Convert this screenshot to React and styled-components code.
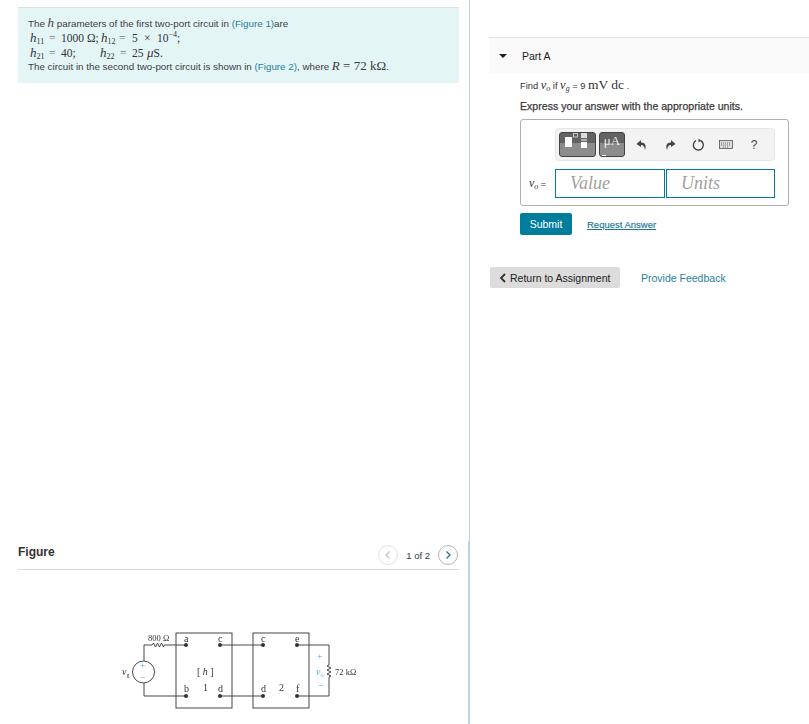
import React from "react";
import styled, { createGlobalStyle } from "styled-components";

const GlobalStyle = createGlobalStyle`
  html, body {
    margin: 0;
    padding: 0;
    background: #fff;
  }
  body {
    font-family: "Liberation Sans", Arial, sans-serif;
    color: #333;
  }
`;

const Page = styled.div`
  display: flex;
  width: 809px;
  height: 724px;
  overflow: hidden;
`;

const LeftPane = styled.div`
  flex: 0 0 470px;
  height: 724px;
  box-sizing: border-box;
  border-right: 1px solid #bcd3e3;
  display: flex;
  flex-direction: column;
`;

const TopSection = styled.div`
  height: 541px;
  box-sizing: border-box;
  padding: 7px 10px 0 18px;
`;

const BottomSection = styled.div`
  flex: 1;
  padding: 0 9px 0 18px;
  border-right: 1px solid #bcd3e3;
`;

const Intro = styled.div`
  height: 76px;
  box-sizing: border-box;
  padding: 9px 10px 0;
  background: #e4f5f6;
  border-top: 1px solid #d9e2e3;
  font-size: 9.8px;
  color: #3d3d3d;
`;

const TextLine = styled.div`
  height: ${(p) => p.$h || 12}px;
  line-height: 12px;
  white-space: pre;
`;

const MathLine = styled.div`
  height: 15px;
  line-height: 15px;
  padding-left: 2px;
  font-family: "Liberation Serif", serif;
  font-size: 11.5px;
  color: #333;
  white-space: pre;
  i {
    font-size: 13px;
  }
  sub {
    font-size: 8px;
    line-height: 0;
    vertical-align: -2px;
  }
  sup {
    font-size: 8px;
    line-height: 0;
  }
`;

const Term = styled.span`
  display: inline-block;
  width: ${(p) => p.$w}px;
  color: ${(p) => (p.$light ? "#777" : "inherit")};
`;

const InlineMath = styled.span`
  font-family: "Liberation Serif", serif;
  font-size: 13px;
`;

const FigLink = styled.span`
  color: #1f7f9c;
`;

const FigureBar = styled.div`
  height: 29px;
  box-sizing: border-box;
  border-bottom: 1px solid #dcdcdc;
  display: flex;
  align-items: center;
  justify-content: space-between;
  padding-bottom: 6px;
`;

const FigureTitle = styled.span`
  font-size: 12px;
  font-weight: bold;
  color: #333;
`;

const Pager = styled.div`
  display: flex;
  align-items: center;
  gap: 8px;
  margin: 6px 1px 0 0;
  font-size: 9.5px;
  color: #2a3a4a;
`;

const PageButton = styled.span`
  width: 20px;
  height: 20px;
  box-sizing: border-box;
  border-radius: 50%;
  border: 1px solid ${(p) => (p.$off ? "#e2e2e2" : "#b5b5b5")};
  color: ${(p) => (p.$off ? "#c4c4c4" : "#2c6e8f")};
  display: flex;
  align-items: center;
  justify-content: center;
`;

const FigureBox = styled.div`
  padding: 45px 0 0 82px;
  svg {
    display: block;
    filter: blur(0.3px);
  }
`;

const RightPane = styled.div`
  flex: 1;
  min-width: 0;
  padding-top: 37px;
`;

const PartHeader = styled.div`
  height: 36px;
  margin-left: 19px;
  box-sizing: border-box;
  border-top: 1px solid #e2e2e2;
  background: #fafafa;
  display: flex;
  align-items: center;
  padding-left: 10px;
  font-size: 10.5px;
  color: #222;
`;

const Caret = styled.span`
  width: 0;
  height: 0;
  border-left: 4px solid transparent;
  border-right: 4px solid transparent;
  border-top: 4px solid #222;
  margin-right: 15px;
`;

const PartBody = styled.div`
  padding-left: 50px;
`;

const Prompt = styled.div`
  margin-top: 4px;
  height: 16px;
  line-height: 16px;
  font-size: 9.3px;
  color: #333;
  white-space: pre;
  b {
    font-family: "Liberation Serif", serif;
    font-weight: normal;
    font-size: 13.5px;
  }
  i {
    font-family: "Liberation Serif", serif;
    font-size: 12.5px;
  }
  sub {
    font-size: 8px;
    line-height: 0;
    vertical-align: -2px;
  }
`;

const Instruction = styled.div`
  margin-top: 8px;
  font-size: 10.5px;
  line-height: 11px;
  letter-spacing: 0.04px;
  color: #3a3a3a;
  -webkit-text-stroke: 0.25px #3a3a3a;
`;

const AnswerBox = styled.div`
  margin-top: 7px;
  height: 87px;
  width: 269px;
  box-sizing: border-box;
  border: 1px solid #b0b0b0;
  border-radius: 3px;
  padding: 8px 13px 0 34px;
`;

const Toolbar = styled.div`
  height: 33px;
  box-sizing: border-box;
  background: #f3f3f3;
  border: 1px solid #e6e6e6;
  border-radius: 4px;
  display: flex;
  align-items: center;
  padding-left: 3px;
`;

const ToolKey = styled.div`
  position: relative;
  width: ${(p) => p.$w}px;
  height: 25px;
  margin-right: 3px;
  box-sizing: border-box;
  border-radius: 3px;
  border: 1px solid #444;
  background: linear-gradient(#636363 0 45%, #8c8c8c 45% 100%);
  overflow: hidden;
  svg {
    display: block;
  }
`;

const KeyLabel = styled.span`
  display: block;
  text-align: center;
  font-family: "Liberation Serif", serif;
  font-size: 13px;
  line-height: 16px;
  color: #ececec;
`;

const KeyMark = styled.span`
  position: absolute;
  left: 2px;
  bottom: 0;
  width: 4px;
  height: 1px;
  background: #fff;
`;

const ToolIcon = styled.span`
  width: 28px;
  display: flex;
  align-items: center;
  justify-content: center;
  color: #444;
  font-size: 12px;
`;

const InputRow = styled.div`
  display: flex;
  align-items: center;
  margin-top: 8px;
  margin-left: -34px;
`;

const VarLabel = styled.div`
  width: 34px;
  box-sizing: border-box;
  padding-left: 8px;
  font-size: 9px;
  color: #333;
  white-space: pre;
  i {
    font-family: "Liberation Serif", serif;
    font-size: 12px;
  }
  sub {
    font-size: 8px;
    line-height: 0;
    vertical-align: -2px;
  }
`;

const AnswerField = styled.div`
  width: ${(p) => p.$w}px;
  height: 29px;
  margin-right: ${(p) => p.$gap || 0}px;
  box-sizing: border-box;
  border: 1px solid #007b9c;
  padding-left: 14px;
  display: flex;
  align-items: center;
  font-family: "Liberation Serif", serif;
  font-style: italic;
  font-size: 18px;
  color: #a3a09c;
`;

const Actions = styled.div`
  display: flex;
  align-items: center;
  margin-top: 7px;
  gap: 15px;
`;

const SubmitButton = styled.div`
  width: 52px;
  height: 22px;
  border-radius: 2px;
  background: #007c9c;
  color: #fff;
  font-size: 10.5px;
  display: flex;
  align-items: center;
  justify-content: center;
`;

const RequestLink = styled.span`
  color: #1a7896;
  font-size: 9.5px;
  text-decoration: underline;
  -webkit-text-stroke: 0.15px #1a7896;
`;

const Footer = styled.div`
  display: flex;
  align-items: center;
  margin: 32px 0 0 20px;
  gap: 21px;
`;

const ReturnButton = styled.div`
  width: 130px;
  height: 21px;
  box-sizing: border-box;
  background: #dcdcdc;
  border-radius: 2px;
  display: flex;
  align-items: center;
  padding-left: 9px;
  gap: 3px;
  font-size: 10.5px;
  color: #222;
`;

const FeedbackLink = styled.span`
  font-size: 10.5px;
  color: #1f7f9c;
`;

const Circuit = () => (
  <svg width="270" height="109" viewBox="0 0 270 109" fontFamily="Liberation Serif, serif" fill="#333">
    <g fill="none" stroke="#333" strokeWidth="0.9">
      <rect x="76" y="18" width="56" height="75" />
      <rect x="153" y="18" width="56" height="75" />
      <path d="M44 46V30H52l1.500-2 2 4 2-4 2 4 2-4 2 4 1-2H86" />
      <path d="M44 68V81H86" />
      <circle cx="43.500" cy="57" r="11" />
      <path d="M120 30H163M120 81H163M197 30H229V50M197 81H229V64" />
      <path d="M229 50l-2 1 4 2-4 2 4 2-4 2 4 2-2 1v2" />
    </g>
    <g>
      <circle cx="86" cy="30" r="2" />
      <circle cx="120" cy="30" r="2" />
      <circle cx="86" cy="81" r="2" />
      <circle cx="120" cy="81" r="2" />
      <circle cx="163" cy="30" r="2" />
      <circle cx="197" cy="30" r="2" />
      <circle cx="163" cy="81" r="2" />
      <circle cx="197" cy="81" r="2" />
    </g>
    <g fontSize="10">
      <text x="84" y="27">a</text>
      <text x="118" y="27">c</text>
      <text x="161" y="27">c</text>
      <text x="195" y="27">e</text>
      <text x="84" y="77">b</text>
      <text x="118" y="77">d</text>
      <text x="161" y="77">d</text>
      <text x="196" y="77">f</text>
      <text x="97" y="60">[ <tspan fontStyle="italic">h</tspan> ]</text>
      <text x="103" y="76">1</text>
      <text x="179" y="76">2</text>
    </g>
    <g fontSize="8.500">
      <text x="48" y="26">800 Ω</text>
      <text x="235" y="60">72 kΩ</text>
    </g>
    <g fontSize="10">
      <text x="22" y="60" fontStyle="italic">v</text>
      <text x="26.500" y="62" fontSize="6">g</text>
      <text x="216" y="60" fontStyle="italic" fill="#5fb0d6">v</text>
      <text x="220.500" y="62" fontSize="6" fill="#5fb0d6">o</text>
      <text x="217" y="45" fill="#5fb0d6">+</text>
      <text x="218" y="74" fill="#5fb0d6">−</text>
      <text x="40" y="54" fill="#5fb0d6">+</text>
      <text x="40" y="66" fill="#5fb0d6">−</text>
    </g>
  </svg>
);

const Chevron = ({ dir, size = 10 }) => (
  <svg width={size} height={size} viewBox="0 0 10 10" fill="none" stroke="currentColor" strokeWidth="1.3">
    <path d={dir === "left" ? "M6.500 1.500L3 5l3.500 3.500" : "M3.500 1.500L7 5 3.500 8.500"} />
  </svg>
);

const App = () => {
  return (
    <Page>
      <GlobalStyle />
      <LeftPane>
        <TopSection>
          <Intro>
            <TextLine $h={13}>
              The <InlineMath><i>h</i></InlineMath> parameters of the first two-port circuit in{" "}
              <FigLink>(Figure 1)</FigLink>are
            </TextLine>
            <MathLine>
              <Term $w={19}><i>h</i><sub>11</sub></Term>
              <Term $w={12} $light>=</Term>
              <Term $w={40}>1000 Ω;</Term>
              <Term $w={18}><i>h</i><sub>12</sub></Term>
              <Term $w={13} $light>=</Term>
              <Term $w={12}>5</Term>
              <Term $w={13}>×</Term>
              10<sup>−4</sup>;
            </MathLine>
            <MathLine>
              <Term $w={19}><i>h</i><sub>21</sub></Term>
              <Term $w={12} $light>=</Term>
              <Term $w={39}>40;</Term>
              <Term $w={20}><i>h</i><sub>22</sub></Term>
              <Term $w={12} $light>=</Term>
              <Term $w={15}>25</Term>
              <i>μ</i>S.
            </MathLine>
            <TextLine>
              The circuit in the second two-port circuit is shown in <FigLink>(Figure 2)</FigLink>, where{" "}
              <InlineMath><i>R</i> = 72 kΩ</InlineMath>.
            </TextLine>
          </Intro>
        </TopSection>
        <BottomSection>
          <FigureBar>
            <FigureTitle>Figure</FigureTitle>
            <Pager>
              <PageButton $off><Chevron dir="left" /></PageButton>
              1 of 2
              <PageButton><Chevron dir="right" /></PageButton>
            </Pager>
          </FigureBar>
          <FigureBox>
            <Circuit />
          </FigureBox>
        </BottomSection>
      </LeftPane>
      <RightPane>
        <PartHeader>
          <Caret />
          Part A
        </PartHeader>
        <PartBody>
          <Prompt>
            Find <i>v<sub>o</sub></i> if <i>v<sub>g</sub></i> = 9 <b>mV dc</b> .
          </Prompt>
          <Instruction>Express your answer with the appropriate units.</Instruction>
          <AnswerBox>
            <Toolbar>
              <ToolKey $w={37}>
                <svg width="35" height="23" viewBox="0 0 35 23">
                  <rect x="5" y="4" width="7" height="10" fill="#fff" />
                  <rect x="13.500" y="0.500" width="4" height="3.500" fill="none" stroke="#ddd" strokeWidth="0.8" />
                  <rect x="21" y="0" width="6" height="5" fill="#ddd" />
                  <rect x="21" y="6.500" width="6" height="1" fill="#fff" />
                  <rect x="21" y="9" width="6" height="6" fill="#fff" />
                </svg>
              </ToolKey>
              <ToolKey $w={26}>
                <KeyLabel>μA</KeyLabel>
                <KeyMark />
              </ToolKey>
              <ToolIcon>
                <svg width="12" height="12" viewBox="0 0 12 12" fill="#444">
                  <path d="M5 1L0.500 5 5 8V6c2.500 0 3.500 1.500 4 5 1.500-4 0.500-7.500-4-7.500z" />
                </svg>
              </ToolIcon>
              <ToolIcon>
                <svg width="12" height="12" viewBox="0 0 12 12" fill="#444">
                  <path d="M7 1l4.500 4L7 8V6C4.500 6 3.500 7.500 3 11 1.500 7 2.500 3.500 7 3.500z" />
                </svg>
              </ToolIcon>
              <ToolIcon>
                <svg width="13" height="13" viewBox="0 0 13 13" fill="none" stroke="#444" strokeWidth="1.400">
                  <path d="M8.500 2.500A5 5 0 1 1 4 2.600" />
                  <path d="M6.500 0.500v4l2.500-2z" fill="#444" stroke="none" />
                </svg>
              </ToolIcon>
              <ToolIcon>
                <svg width="14" height="9" viewBox="0 0 14 9" fill="#ddd" stroke="#555" strokeWidth="0.8">
                  <rect x="0.500" y="0.500" width="13" height="8" />
                  <path d="M2 3H12M2 5H12M4 7H10" strokeDasharray="1 1" />
                </svg>
              </ToolIcon>
              <ToolIcon>?</ToolIcon>
            </Toolbar>
            <InputRow>
              <VarLabel>
                <i>v<sub>o</sub></i> =
              </VarLabel>
              <AnswerField $w={110} $gap={1}>Value</AnswerField>
              <AnswerField $w={109}>Units</AnswerField>
            </InputRow>
          </AnswerBox>
          <Actions>
            <SubmitButton>Submit</SubmitButton>
            <RequestLink>Request Answer</RequestLink>
          </Actions>
        </PartBody>
        <Footer>
          <ReturnButton>
            <svg width="8" height="10" viewBox="0 0 8 10" fill="none" stroke="#333" strokeWidth="1.800">
              <path d="M6 1L2 5l4 4" />
            </svg>
            Return to Assignment
          </ReturnButton>
          <FeedbackLink>Provide Feedback</FeedbackLink>
        </Footer>
      </RightPane>
    </Page>
  );
};

export default App;
